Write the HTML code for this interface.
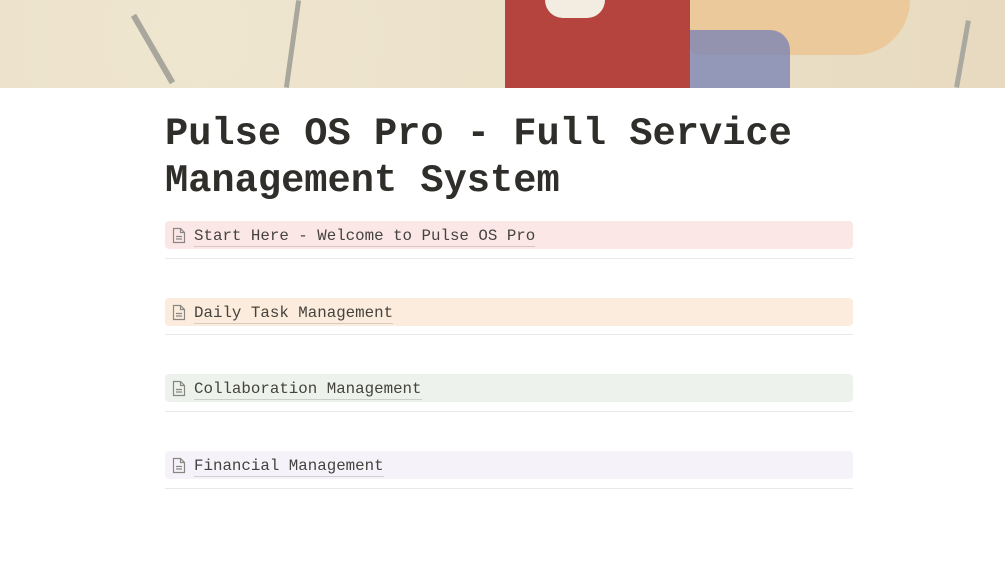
<!DOCTYPE html>
<html><head><meta charset="utf-8"><style>
body{margin:0;width:1005px;height:569px;background:#fff;overflow:hidden;font-family:"Liberation Mono",monospace;color:#37352f}
.banner{position:absolute;left:0;top:0;width:1005px;height:88px;background:#ebdfc6;overflow:hidden}
.banner div{position:absolute}
h1{position:absolute;left:165px;top:111px;margin:0;font-size:38.7px;line-height:47px;font-weight:bold;color:#2f2e2a;letter-spacing:0}
.row{position:absolute;left:165px;width:688px;height:28px;border-radius:4px}
.row svg{position:absolute;left:6px;top:6px}
.row span{position:absolute;left:29px;top:5px;font-size:15.8px;line-height:20px;border-bottom:1px solid rgba(55,53,47,.18);color:#45433d}
.line{position:absolute;left:165px;width:688px;height:1px;background:#e9e9e7}
</style></head><body>
<div class="banner">
<div style="left:0;top:0;width:1005px;height:88px;background:radial-gradient(circle at 20% 40%,#efe6d0,#e7dac0)"></div>
<div style="left:690px;top:0;width:220px;height:55px;background:#ecc99a;border-radius:0 0 60px 10px"></div>
<div style="left:650px;top:30px;width:140px;height:58px;background:#7d86b4;border-radius:40px 20px 0 0;opacity:.8"></div>
<div style="left:505px;top:0;width:185px;height:88px;background:#b5433e"></div>
<div style="left:545px;top:0;width:60px;height:18px;background:#f3ece0;border-radius:0 0 30px 30px"></div>
<div style="left:150px;top:10px;width:6px;height:78px;background:#a9a79c;transform:rotate(-30deg)"></div>
<div style="left:290px;top:0;width:5px;height:88px;background:#a9a79c;transform:rotate(8deg)"></div>
<div style="left:960px;top:20px;width:5px;height:68px;background:#aaa9a0;transform:rotate(10deg)"></div>
</div>
<h1>Pulse OS Pro - Full Service<br>Management System</h1>

<div class="row" style="top:221px;background:#fbe8e6"><svg width="16" height="17" viewBox="0 0 16 17"><path d="M2.5 1.5h7l4 4v10h-11z M9.5 1.5v4h4 M5 9.5h6 M5 12h6" fill="none" stroke="#8a8782" stroke-width="1.2"/></svg><span>Start Here - Welcome to Pulse OS Pro</span></div>
<div class="line" style="top:258px"></div>
<div class="row" style="top:298px;background:#fbecdd"><svg width="16" height="17" viewBox="0 0 16 17"><path d="M2.5 1.5h7l4 4v10h-11z M9.5 1.5v4h4 M5 9.5h6 M5 12h6" fill="none" stroke="#8a8782" stroke-width="1.2"/></svg><span>Daily Task Management</span></div>
<div class="line" style="top:334px"></div>
<div class="row" style="top:374px;background:#edf2ec"><svg width="16" height="17" viewBox="0 0 16 17"><path d="M2.5 1.5h7l4 4v10h-11z M9.5 1.5v4h4 M5 9.5h6 M5 12h6" fill="none" stroke="#8a8782" stroke-width="1.2"/></svg><span>Collaboration Management</span></div>
<div class="line" style="top:411px"></div>
<div class="row" style="top:451px;background:#f6f2fa"><svg width="16" height="17" viewBox="0 0 16 17"><path d="M2.5 1.5h7l4 4v10h-11z M9.5 1.5v4h4 M5 9.5h6 M5 12h6" fill="none" stroke="#8a8782" stroke-width="1.2"/></svg><span>Financial Management</span></div>
<div class="line" style="top:488px"></div>
</body></html>
